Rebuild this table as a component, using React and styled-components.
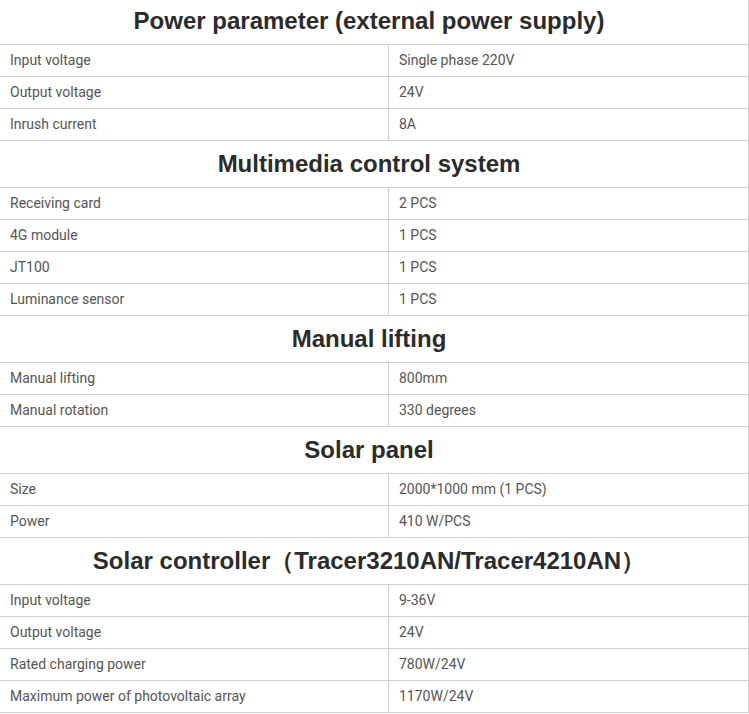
import React from "react";
import styled, { createGlobalStyle } from "styled-components";

const GlobalStyle = createGlobalStyle`
  html, body {
    margin: 0;
    padding: 0;
    background: #fff;
  }
`;

const Page = styled.div`
  width: 749px;
  margin-top: -3px;
  overflow: hidden;
`;

const SpecTable = styled.table`
  border-collapse: collapse;
  width: 750px;
  margin-left: -1px;
  table-layout: fixed;
`;

const HeadCell = styled.td`
  height: 46px;
  padding: 0 10px 0 0;
  border: 1px solid #cfcfcf;
  text-align: center;
  font-family: "Liberation Sans", Arial, sans-serif;
  font-weight: bold;
  font-size: 24px;
  color: #2b2b2b;
`;

const Cell = styled.td`
  height: 29px;
  padding: 0 0 2px 10px;
  border: 1px solid #cfcfcf;
  font-family: Roboto, "Noto Sans", sans-serif;
  font-size: 14px;
  color: #555;
  text-align: left;
  white-space: nowrap;
`;

const sections = [
  {
    title: "Power parameter (external power supply)",
    rows: [
      ["Input voltage", "Single phase 220V"],
      ["Output voltage", "24V"],
      ["Inrush current", "8A"],
    ],
  },
  {
    title: "Multimedia control system",
    rows: [
      ["Receiving card", "2 PCS"],
      ["4G module", "1 PCS"],
      ["JT100", "1 PCS"],
      ["Luminance sensor", "1 PCS"],
    ],
  },
  {
    title: "Manual lifting",
    rows: [
      ["Manual lifting", "800mm"],
      ["Manual rotation", "330 degrees"],
    ],
  },
  {
    title: "Solar panel",
    rows: [
      ["Size", "2000*1000 mm (1 PCS)"],
      ["Power", "410 W/PCS"],
    ],
  },
  {
    title: "Solar controller\uFF08Tracer3210AN/Tracer4210AN\uFF09",
    rows: [
      ["Input voltage", "9-36V"],
      ["Output voltage", "24V"],
      ["Rated charging power", "780W/24V"],
      ["Maximum power of photovoltaic array", "1170W/24V"],
    ],
  },
];

export default function App() {
  return (
    <>
      <GlobalStyle />
      <Page>
        <SpecTable>
          <colgroup>
            <col style={{ width: 389 }} />
            <col />
          </colgroup>
          <tbody>
            {sections.map((section, idx) => (
              <React.Fragment key={idx}>
                <tr>
                  <HeadCell colSpan={2}>{section.title}</HeadCell>
                </tr>
                {section.rows.map(([label, value], i) => (
                  <tr key={i}>
                    <Cell>{label}</Cell>
                    <Cell>{value}</Cell>
                  </tr>
                ))}
              </React.Fragment>
            ))}
          </tbody>
        </SpecTable>
      </Page>
    </>
  );
}
